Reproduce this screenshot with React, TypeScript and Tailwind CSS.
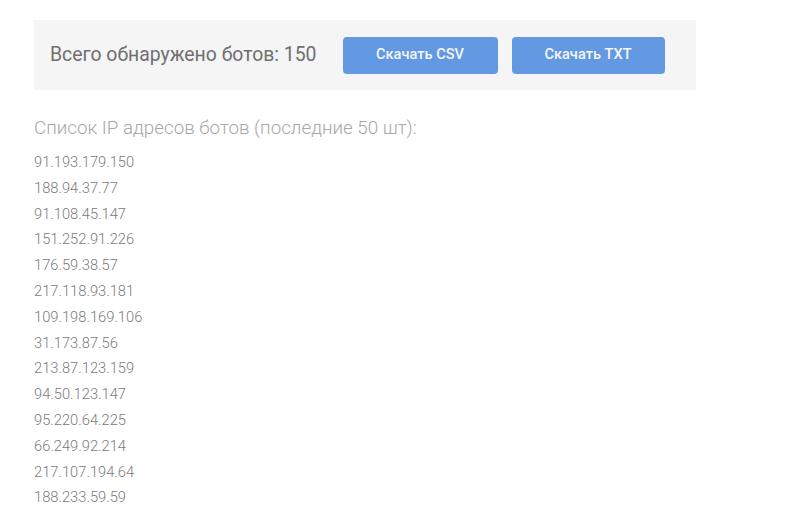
const ips = [
  "91.193.179.150",
  "188.94.37.77",
  "91.108.45.147",
  "151.252.91.226",
  "176.59.38.57",
  "217.118.93.181",
  "109.198.169.106",
  "31.173.87.56",
  "213.87.123.159",
  "94.50.123.147",
  "95.220.64.225",
  "66.249.92.214",
  "217.107.194.64",
  "188.233.59.59",
];

export default function App() {
  return (
    <div className="min-h-screen bg-white pl-[34px] pt-[20px] font-['Roboto',sans-serif]">
      <div className="flex h-[70px] w-[662px] items-center bg-[#f5f5f5] pl-[16px]">
        <span className="text-[19.4px] text-[#6f6f6f]">Всего обнаружено ботов: 150</span>
        <button
          type="button"
          className="ml-[26px] h-[37px] w-[155px] rounded-[4px] bg-[#6398e2] text-[14.6px] font-medium text-[#f4f7fd]"
        >
          Скачать CSV
        </button>
        <button
          type="button"
          className="ml-[14px] h-[37px] w-[153px] rounded-[4px] bg-[#6398e2] text-[14.6px] font-medium text-[#f4f7fd]"
        >
          Скачать TXT
        </button>
      </div>

      <p className="mt-[26px] text-[18.8px] font-light leading-[24px] text-[#a8a8a8]">
        Список IP адресов ботов (последние 50 шт):
      </p>
      <ul className="mt-[10px]">
        {ips.map((ip) => (
          <li key={ip} className="text-[14.7px] font-light leading-[25.8px] text-[#7c7c7c]">
            {ip}
          </li>
        ))}
      </ul>
    </div>
  );
}
